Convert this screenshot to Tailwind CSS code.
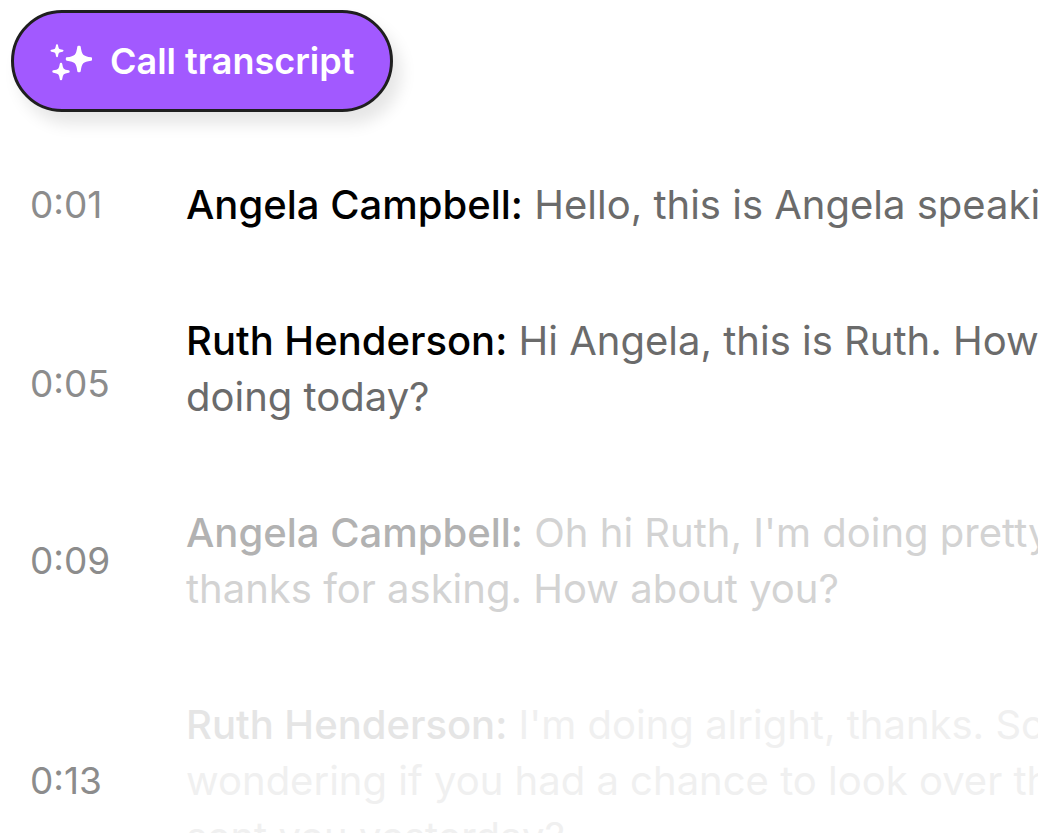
<!DOCTYPE html>
<html lang="en">
<head>
<meta charset="utf-8">
<meta name="viewport" content="width=device-width, initial-scale=1">
<title>Call transcript</title>
<script src="https://cdn.jsdelivr.net/npm/@tailwindcss/browser@4"></script>
</head>
<body class="h-screen overflow-hidden bg-white font-['Inter',sans-serif]">
<main class="flex flex-col items-start gap-[65px]">
  <button type="button" class="mt-[10px] ml-[11px] flex h-[102px] items-center gap-[18px] rounded-full border-3 border-[#1f1f1f] bg-[#a259ff] pr-9 pl-9 text-4xl font-semibold text-white shadow-[8px_12px_16px_rgba(0,0,0,0.1)]">
    <svg class="h-10 w-[42px]" viewBox="0 0 42 40" fill="currentColor" stroke="currentColor" stroke-width="2.4" stroke-linecap="round" stroke-linejoin="round" aria-hidden="true">
      <path d="M28.500 6 H29.500 C30.500 14.500 32.500 16.500 41 17.500 V18.500 C32.500 19.500 30.500 21.500 29.500 30 H28.500 C27.500 21.500 25.500 19.500 17 18.500 V17.500 C25.500 16.500 27.500 14.500 28.500 6Z"/>
      <path stroke-width="2" d="M7 4.200 C7.500 8.500 8.200 9.200 12.500 9.700 C8.200 10.200 7.500 10.900 7 15.200 C6.500 10.900 5.800 10.200 1.500 9.700 C5.800 9.200 6.500 8.500 7 4.200Z"/>
      <path d="M11 23 C11.800 28.500 13 29.700 18.500 30.500 C13 31.300 11.800 32.500 11 38 C10.200 32.500 9 31.300 3.500 30.500 C9 29.700 10.200 28.500 11 23Z"/>
    </svg>
    <span>Call transcript</span>
  </button>
  <ol class="grid w-full gap-20 text-[40px] leading-14 whitespace-nowrap text-[#6b6b6b]">
    <li class="flex items-center">
      <time class="w-[186px] shrink-0 pl-[30px] text-[37px] text-[#8c8c8c]">0:01</time>
      <p><b class="font-medium text-black">Angela Campbell:</b> Hello, this is Angela speaking.</p>
    </li>
    <li class="flex items-center">
      <time class="w-[186px] shrink-0 pt-[30px] pl-[30px] text-[37px] text-[#8c8c8c]">0:05</time>
      <p><b class="font-medium text-black">Ruth Henderson:</b> Hi Angela, this is Ruth. How are you<br>doing today?</p>
    </li>
    <li class="flex items-center">
      <time class="w-[186px] shrink-0 pl-[30px] text-[37px] text-[#8c8c8c]">0:09</time>
      <p class="text-[#d3d3d3]"><b class="font-medium text-[#b2b2b2]">Angela Campbell:</b> Oh hi Ruth, I'm doing pretty good,<br>thanks for asking. How about you?</p>
    </li>
    <li class="flex items-center">
      <time class="w-[186px] shrink-0 pl-[30px] text-[37px] text-[#8c8c8c]">0:13</time>
      <p class="text-[#f0f0f0]"><b class="font-medium text-[#e5e5e5]">Ruth Henderson:</b> I'm doing alright, thanks. So I was<br>wondering if you had a chance to look over the email I<br>sent you yesterday?</p>
    </li>
  </ol>
</main>
</body>
</html>
